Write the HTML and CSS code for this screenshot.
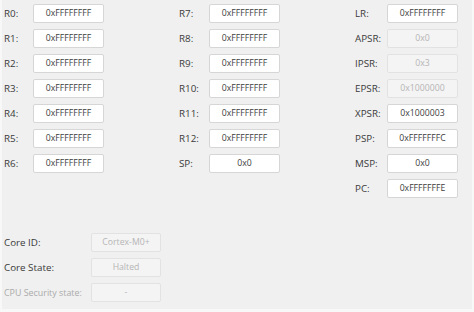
FILE: index.html
```html
<!DOCTYPE html>
<html lang="en">
<head>
  <meta charset="UTF-8">
  <title>Registers</title>
  <link rel="stylesheet" href="styles.css">
</head>
<body>
  <div class="panel">
    <!-- register columns -->
    <div class="regs">
      <div class="col col-a">
        <span class="lbl">R0:</span><div class="val">0xFFFFFFFF</div>
        <span class="lbl">R1:</span><div class="val">0xFFFFFFFF</div>
        <span class="lbl">R2:</span><div class="val">0xFFFFFFFF</div>
        <span class="lbl">R3:</span><div class="val">0xFFFFFFFF</div>
        <span class="lbl">R4:</span><div class="val">0xFFFFFFFF</div>
        <span class="lbl">R5:</span><div class="val">0xFFFFFFFF</div>
        <span class="lbl">R6:</span><div class="val">0xFFFFFFFF</div>
      </div>
      <div class="col col-b">
        <span class="lbl">R7:</span><div class="val">0xFFFFFFFF</div>
        <span class="lbl">R8:</span><div class="val">0xFFFFFFFF</div>
        <span class="lbl">R9:</span><div class="val">0xFFFFFFFF</div>
        <span class="lbl">R10:</span><div class="val">0xFFFFFFFF</div>
        <span class="lbl">R11:</span><div class="val">0xFFFFFFFF</div>
        <span class="lbl">R12:</span><div class="val">0xFFFFFFFF</div>
        <span class="lbl">SP:</span><div class="val">0x0</div>
      </div>
      <div class="col col-c">
        <span class="lbl">LR:</span><div class="val">0xFFFFFFFF</div>
        <span class="lbl">APSR:</span><div class="val off">0x0</div>
        <span class="lbl">IPSR:</span><div class="val off">0x3</div>
        <span class="lbl">EPSR:</span><div class="val off">0x1000000</div>
        <span class="lbl">XPSR:</span><div class="val">0x1000003</div>
        <span class="lbl">PSP:</span><div class="val">0xFFFFFFFC</div>
        <span class="lbl">MSP:</span><div class="val">0x0</div>
        <span class="lbl">PC:</span><div class="val">0xFFFFFFFE</div>
      </div>
    </div>

    <!-- core info -->
    <div class="core">
      <span class="lbl">Core ID:</span><div class="val off">Cortex-M0+</div>
      <span class="lbl">Core State:</span><div class="val off">Halted</div>
      <span class="lbl dim">CPU Security state:</span><div class="val off">-</div>
    </div>
  </div>
</body>
</html>
```

FILE: styles.css
```css
body {
  margin: 0;
  background: #f8f8f8;
  font-family: "Open Sans", "Noto Sans", sans-serif;
  font-size: 8.7px;
}
.panel {
  background: #f0f0f0;
  width: 470px;
  height: 309px;
  margin-left: 2px;
  padding: 4px 0 0 2px;
  box-sizing: border-box;
}
.regs {
  display: grid;
  grid-template-columns: 175px 176px 1fr;
}
.col {
  display: grid;
  row-gap: 6px;
  grid-auto-rows: 19px;
  align-items: center;
}
.col-a {
  grid-template-columns: 29px 71px;
}
.col-b {
  grid-template-columns: 30px 71px;
}
.col-c {
  grid-template-columns: 32px 71px;
}
.lbl {
  color: #3a3a3a;
  font-size: 9.8px;
  white-space: nowrap;
}
.lbl.dim {
  color: #ababab;
  font-size: 8.9px;
}
.val {
  height: 19px;
  box-sizing: border-box;
  background: #fff;
  border: 1px solid #d6d6d6;
  border-radius: 2px;
  color: #3c3c3c;
  text-align: center;
  line-height: 17px;
}
.val.off {
  background: #f4f4f4;
  border-color: #e2e2e2;
  color: #b4b4b4;
}
.core {
  display: grid;
  grid-template-columns: 87px 70px;
  grid-auto-rows: 19px;
  row-gap: 6px;
  align-items: center;
  margin-top: 35px;
}
```
